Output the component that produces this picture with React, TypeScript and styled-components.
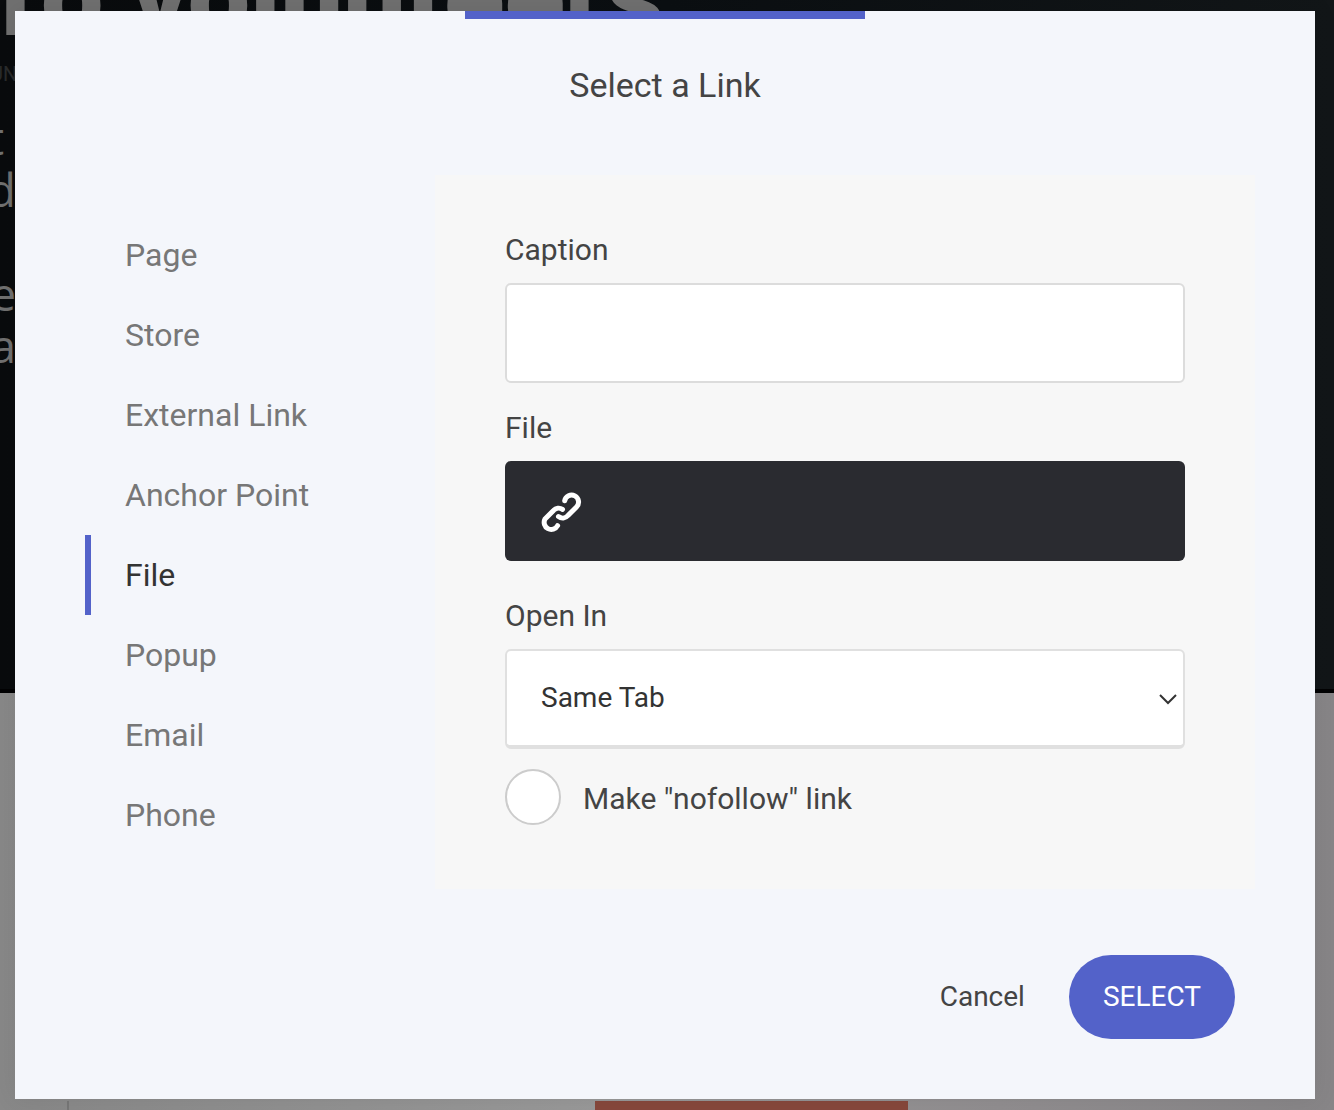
import React, { useState } from "react";
import styled, { createGlobalStyle } from "styled-components";

const Global = createGlobalStyle`
  *, *::before, *::after { box-sizing: border-box; }
  body { margin: 0; background: #8c8c8c; font-family: Roboto, sans-serif; color: #444; }
  button, input, select { font: inherit; color: inherit; }
`;

const Screen = styled.div`
  position: relative;
  height: 100vh;
  overflow: hidden;
  background: linear-gradient(90deg, #888, #999 45%, #918e90 75%, #878587);
`;

const Hero = styled.header`
  height: 693px;
  overflow: hidden;
  border-bottom: 4px solid #020203;
  background: linear-gradient(90deg, #090b0d, #0b0f12 50%, #121618);
  color: #707070;
`;

const HeroTitle = styled.p`
  margin: -59px 0 0 1px;
  font-size: 111px;
  line-height: 112px;
  font-weight: 900;
  white-space: nowrap;
`;

const HeroMeta = styled.p`
  margin: 11px 0 0 -10px;
  font-size: 20px;
  line-height: 20px;
  color: #292b2c;
`;

const HeroCopy = styled.p`
  margin: 27px 0 0;
  width: 16px;
  display: flex;
  flex-direction: column;
  align-items: flex-end;
  font-family: "Open Sans", sans-serif;
  font-size: 46px;
  line-height: 52px;
  white-space: pre;
`;

const Cards = styled.div`
  position: absolute;
  left: 67px;
  right: 0;
  bottom: 0;
  height: 9px;
  padding-left: 526px;
  border-left: 2px solid #777;
`;

const CardAccent = styled.div`
  width: 313px;
  height: 9px;
  background: #87483c;
`;

const Dialog = styled.section`
  position: absolute;
  inset: 11px 19px 11px 15px;
  display: flex;
  flex-direction: column;
  background: #f4f6fb;
  box-shadow: 0 0 24px rgba(0, 0, 0, 0.08);
`;

const Accent = styled.div`
  width: 400px;
  height: 8px;
  flex: none;
  align-self: center;
  background: #5362c9;
`;

const Title = styled.h2`
  margin: 46px 0 70px;
  text-align: center;
  font-size: 34px;
  line-height: 40px;
  font-weight: 400;
`;

const Body = styled.div`
  display: flex;
  padding: 0 60px 0 70px;
`;

const Nav = styled.nav`
  display: flex;
  flex-direction: column;
  width: 350px;
  flex: none;
  padding-top: 40px;
`;

const NavLink = styled.a<{ $active: boolean }>`
  display: block;
  padding-left: 34px;
  border-left: 6px solid ${(p) => (p.$active ? "#5362c9" : "transparent")};
  font-size: 32px;
  line-height: 80px;
  color: ${(p) => (p.$active ? "#333" : "#777")};
  text-decoration: none;
`;

const Panel = styled.form`
  flex: 1;
  display: flex;
  flex-direction: column;
  padding: 57px 70px 64px;
  background: #f7f7f7;
`;

const Label = styled.label`
  font-size: 30px;
  line-height: 36px;
`;

const CheckLabel = styled(Label)`
  padding-top: 4px;
`;

const Field = styled.div<{ $after: number }>`
  display: flex;
  flex-direction: column;
  gap: 15px;
  margin-bottom: ${(p) => p.$after}px;
`;

const TextInput = styled.input`
  height: 100px;
  padding: 0 34px;
  border: 2px solid #dcdcdc;
  border-radius: 6px;
  background: #fff;
  font-size: 28px;
`;

const FileButton = styled.button`
  display: flex;
  align-items: center;
  height: 100px;
  padding: 4px 34px 0;
  border: 0;
  border-radius: 6px;
  background: #2a2b30;
  color: #fff;
`;

const SelectBox = styled.div`
  display: grid;
  align-items: center;
  & > * { grid-area: 1 / 1; }
  & > svg { justify-self: end; margin-right: 8px; pointer-events: none; }
`;

const Select = styled.select`
  appearance: none;
  height: 100px;
  padding: 0 34px 2px;
  border: 2px solid #e0e0e0;
  border-bottom-width: 4px;
  border-radius: 6px;
  background: #fff;
  font-size: 28px;
  color: #333;
`;

const CheckRow = styled.div`
  display: flex;
  align-items: center;
  gap: 22px;
`;

const Check = styled.input`
  appearance: none;
  width: 56px;
  height: 56px;
  margin: 0;
  border: 2px solid #ccc;
  border-radius: 50%;
  background: #fff;
  &:checked { background: #5362c9; }
`;

const Actions = styled.footer`
  display: flex;
  justify-content: flex-end;
  gap: 44px;
  padding: 66px 80px 60px;
`;

const CancelButton = styled.button`
  padding: 0 0 2px;
  border: 0;
  background: none;
  font-size: 28px;
`;

const SelectButton = styled.button`
  height: 84px;
  padding: 0 34px 2px;
  border: 0;
  border-radius: 42px;
  background: #5362c9;
  color: #fff;
  font-size: 28px;
`;

const LinkIcon = () => (
  <svg width="44" height="44" viewBox="0 0 44 44" fill="none" stroke="currentColor" strokeWidth="5" strokeLinecap="round" aria-hidden="true">
    <path d="M25.7 9.7A7 7 0 1 1 37.5 16L29 24.500A7 7 0 0 1 19.500 25.600" />
    <path d="M18.600 34.700A7 7 0 1 1 6 28L14.500 19.400A7 7 0 0 1 23.500 18.300" />
  </svg>
);

const Chevron = () => (
  <svg width="18" height="12" viewBox="0 0 18 12" fill="none" stroke="#333" strokeWidth="2" aria-hidden="true">
    <path d="M1 2l8 8 8-8" />
  </svg>
);

const linkTypes = ["Page", "Store", "External Link", "Anchor Point", "File", "Popup", "Email", "Phone"];

export default function App() {
  const [active, setActive] = useState("File");
  return (
    <Screen>
      <Global />
      <Hero aria-hidden="true">
        <HeroTitle>ro volunteers</HeroTitle>
        <HeroMeta>UN</HeroMeta>
        <HeroCopy>
          <span>t </span>
          <span>d</span>
          <span> </span>
          <span>e</span>
          <span>ea</span>
        </HeroCopy>
      </Hero>
      <Cards aria-hidden="true">
        <CardAccent />
      </Cards>
      <Dialog role="dialog" aria-labelledby="dialog-title">
        <Accent />
        <Title id="dialog-title">Select a Link</Title>
        <Body>
          <Nav aria-label="Link type">
            {linkTypes.map((name) => (
              <NavLink key={name} href="#" $active={name === active} onClick={() => setActive(name)}>
                {name}
              </NavLink>
            ))}
          </Nav>
          <Panel id="link-form">
            <Field $after={27}>
              <Label htmlFor="caption">Caption</Label>
              <TextInput id="caption" type="text" />
            </Field>
            <Field $after={37}>
              <Label htmlFor="file">File</Label>
              <FileButton id="file" type="button">
                <LinkIcon />
              </FileButton>
            </Field>
            <Field $after={20}>
              <Label htmlFor="target">Open In</Label>
              <SelectBox>
                <Select id="target">
                  <option>Same Tab</option>
                  <option>New Tab</option>
                </Select>
                <Chevron />
              </SelectBox>
            </Field>
            <CheckRow>
              <Check id="nofollow" type="checkbox" />
              <CheckLabel htmlFor="nofollow">Make "nofollow" link</CheckLabel>
            </CheckRow>
          </Panel>
        </Body>
        <Actions>
          <CancelButton type="button">Cancel</CancelButton>
          <SelectButton type="submit" form="link-form">SELECT</SelectButton>
        </Actions>
      </Dialog>
    </Screen>
  );
}
